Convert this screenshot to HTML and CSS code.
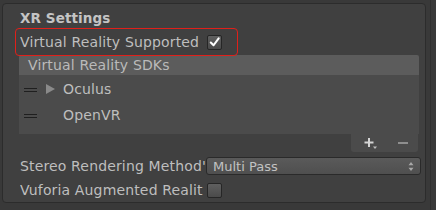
FILE: index.html
```html
<!DOCTYPE html>
<html>
<head>
<meta charset="utf-8">
<link rel="stylesheet" href="styles.css">
</head>
<body>
<div class="screen">
  <div class="panel">
    <div class="title">XR Settings</div>
    <div class="field vr-row">
      <span class="label">Virtual Reality Supported</span>
      <span class="checkbox">
        <svg width="14" height="14" viewBox="0 0 14 14"><polyline points="3,7.5 6,10.5 11.5,3" fill="none" stroke="#ffffff" stroke-width="2.2" stroke-linecap="round" stroke-linejoin="round"/></svg>
      </span>
      <span class="highlight"></span>
    </div>
    <div class="list">
      <div class="list-header">Virtual Reality SDKs</div>
      <div class="list-body">
        <div class="item">
          <span class="handle"></span>
          <span class="arrow"></span>
          <span class="item-name">Oculus</span>
        </div>
        <div class="item">
          <span class="handle"></span>
          <span class="arrow-space"></span>
          <span class="item-name">OpenVR</span>
        </div>
      </div>
      <div class="list-footer">
        <svg class="plus" width="16" height="14" viewBox="0 0 16 14"><path d="M5 1v9M0.5 5.5h9" stroke="#d4d4d4" stroke-width="2"/><path d="M9 9.5h4l-2 2.5z" fill="#bdbdbd"/></svg>
        <svg class="minus" width="12" height="4" viewBox="0 0 12 4"><path d="M1 2h10" stroke="#8e8e8e" stroke-width="2"/></svg>
      </div>
    </div>
    <div class="field stereo-row">
      <span class="label">Stereo Rendering Method'</span>
      <span class="dropdown">
        <span class="dropdown-text">Multi Pass</span>
        <svg class="updown" width="6" height="9" viewBox="0 0 6 9"><path d="M3 0l2.5 3.2h-5z M3 9l2.5-3.2h-5z" fill="#a8a8a8"/></svg>
      </span>
    </div>
    <div class="field vuforia-row">
      <span class="label">Vuforia Augmented Realit</span>
      <span class="checkbox"></span>
    </div>
  </div>
  <div class="divider"></div>
</div>
</body>
</html>
```
FILE: styles.css
```css
html, body {
  margin: 0;
  padding: 0;
}
body {
  background: #393939;
  font-family: "DejaVu Sans", sans-serif;
  font-size: 14px;
  color: #bebebe;
  width: 436px;
  height: 210px;
  overflow: hidden;
}
.screen {
  display: flex;
  height: 210px;
}
.panel {
  margin: 3px 0 0 2px;
  width: 403px;
  height: 193px;
  padding: 5px 3px 0 16px;
  border: 1px solid #2c2c2c;
  border-radius: 4px;
  background: #404040;
  display: flex;
  flex-direction: column;
}
.divider {
  margin-left: 4px;
  width: 1px;
  height: 210px;
  background: #2f2f2f;
}
.title {
  font-weight: bold;
  line-height: 18px;
  height: 18px;
  margin-left: 1px;
  color: #c4c4c4;
  font-size: 13.5px;
  letter-spacing: 0.1px;
}
.field {
  display: flex;
  align-items: center;
  position: relative;
  margin-left: 1px;
}
.label {
  white-space: nowrap;
  overflow: hidden;
  letter-spacing: 0.15px;
}
.vr-row {
  margin-top: 4px;
  height: 22px;
  line-height: 22px;
}
.vr-row .label {
  width: 187px;
}
.checkbox {
  width: 13px;
  height: 13px;
  border: 1px solid #262626;
  border-radius: 2px;
  background: linear-gradient(#5f5f5f, #4b4b4b);
  display: flex;
  align-items: center;
  justify-content: center;
}
.checkbox svg {
  display: block;
}
.highlight {
  position: absolute;
  left: -5px;
  top: -3px;
  width: 221px;
  height: 26px;
  border: 1.5px solid #e0201a;
  border-radius: 4px;
  pointer-events: none;
}
.list {
  margin-top: 2px;
  margin-right: 3px;
  display: flex;
  flex-direction: column;
}
.list-header {
  height: 20px;
  line-height: 21px;
  padding-left: 9px;
  background: #5c5c5c;
  border-radius: 2px 2px 0 0;
  color: #bababa;
  letter-spacing: 0.15px;
}
.list-body {
  background: #4b4b4b;
  padding: 1px 0 6px 5px;
}
.item {
  height: 26px;
  display: flex;
  align-items: center;
}
.handle {
  width: 13px;
  height: 2px;
  border-top: 1.5px solid #1f1f1f;
  border-bottom: 1.5px solid #1f1f1f;
  margin-top: 2px;
}
.arrow {
  margin-left: 9px;
  width: 0;
  height: 0;
  border-left: 9px solid #8a8a8a;
  border-top: 5px solid transparent;
  border-bottom: 5px solid transparent;
}
.arrow-space {
  margin-left: 9px;
  width: 9px;
}
.item-name {
  margin-left: 8px;
  color: #bebebe;
  letter-spacing: 0.15px;
}
.list-footer {
  align-self: flex-end;
  width: 67px;
  height: 18px;
  margin-right: 1px;
  background: #4b4b4b;
  border-radius: 0 0 3px 3px;
  display: flex;
  align-items: center;
}
.plus {
  margin-left: 13px;
  margin-top: 2px;
}
.minus {
  margin-left: 17px;
}
.stereo-row {
  margin-top: 5px;
  height: 18px;
}
.stereo-row .label {
  width: 186px;
}
.dropdown {
  flex: 1;
  height: 16px;
  margin-right: 1px;
  border: 1px solid #2a2a2a;
  border-radius: 3px;
  background: linear-gradient(#5a5a5a, #4f4f4f);
  display: flex;
  align-items: center;
  padding: 0 6px 0 6px;
}
.dropdown-text {
  flex: 1;
  font-size: 13px;
  color: #c2c2c2;
}
.vuforia-row {
  margin-top: 4px;
  height: 22px;
}
.vuforia-row .label {
  width: 187px;
}
```
